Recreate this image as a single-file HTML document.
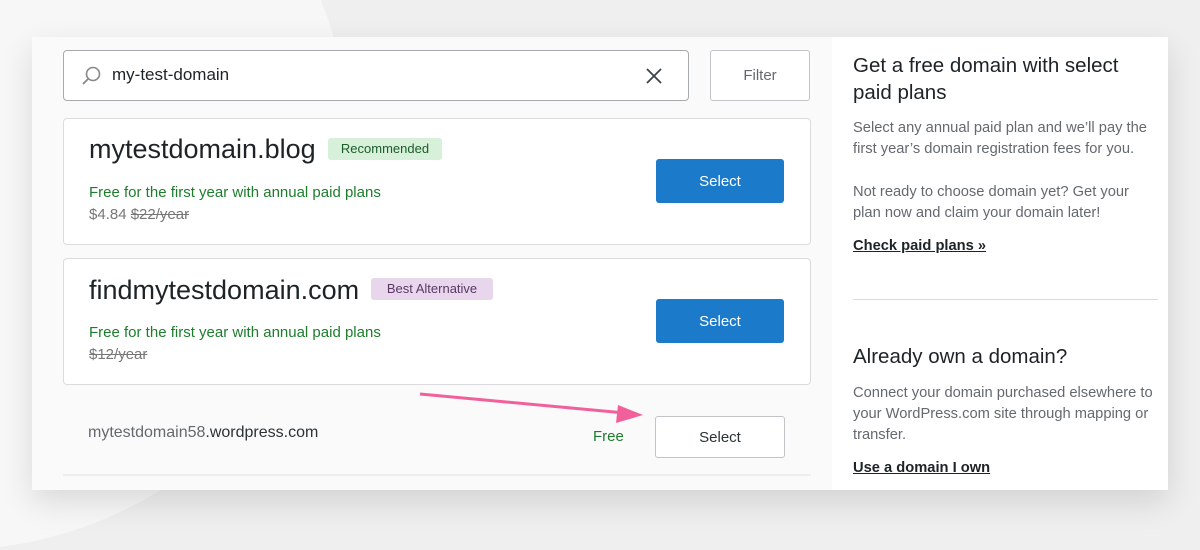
<!DOCTYPE html>
<html><head><style>
*{margin:0;padding:0;box-sizing:border-box}
body{width:1200px;height:528px;overflow:hidden;background:#efefef;font-family:"Liberation Sans",sans-serif;position:relative}
.blob{position:absolute;left:-450px;top:-250px;width:800px;height:800px;border-radius:50%;background:#f7f7f7}
.panel{position:absolute;left:32px;top:37px;width:1136px;height:453px;background:#fafafa;box-shadow:0 12px 30px rgba(0,0,0,.12)}
.right{position:absolute;left:800px;top:0;width:336px;height:453px;background:#fff}
.a{position:absolute}
.box{position:absolute;border:1px solid #dcdcde;border-radius:4px;background:#fff}
.t{position:absolute;white-space:nowrap}
.btn{position:absolute;border-radius:3px;display:flex;align-items:center;justify-content:center;font-size:15px}
.blue{background:#1b7ac9;color:#fff}
.out{background:#fff;border:1px solid #c3c4c7;color:#2c3338}
.g{color:#1d7d2d;font-size:15px}
.p{color:#777;font-size:15px}
.rt{color:#646970;font-size:14.7px;line-height:21px}
.lk{color:#1d2327;font-size:14.7px;text-decoration:underline;font-weight:bold}
</style></head><body>
<div class="blob"></div>
<div class="panel">
<div class="right"></div>
</div>
<div class="box" style="left:63px;top:50px;width:626px;height:51px;border-color:#a7aaad"></div>
<svg class="a" style="left:80px;top:65px" width="22" height="22" viewBox="0 0 22 22"><circle cx="13" cy="9" r="6.5" fill="none" stroke="#888" stroke-width="1.6"/><path d="M8.5 13.5 3 19" stroke="#888" stroke-width="1.8"/></svg>
<div class="t" style="left:112px;top:65px;font-size:17px;color:#1d2327">my-test-domain</div>
<svg class="a" style="left:645px;top:67px" width="18" height="18"><path d="M2 2 16 16M16 2 2 16" stroke="#3c434a" stroke-width="1.8"/></svg>
<div class="btn out" style="left:710px;top:50px;width:100px;height:51px;color:#646970">Filter</div>

<div class="box" style="left:63px;top:118px;width:748px;height:127px"></div>
<div class="t" style="left:89px;top:134px;font-size:27px;color:#1d2327">mytestdomain.blog</div>
<div class="t" style="left:328px;top:138px;width:114px;height:22px;background:#d6f0da;border-radius:3px;color:#1c5b2a;font-size:13px;text-align:center;line-height:22px">Recommended</div>
<div class="t g" style="left:89px;top:184px">Free for the first year with annual paid plans</div>
<div class="t p" style="left:89px;top:206px">$4.84 <s>$22/year</s></div>
<div class="btn blue" style="left:656px;top:159px;width:128px;height:44px">Select</div>

<div class="box" style="left:63px;top:258px;width:748px;height:127px"></div>
<div class="t" style="left:89px;top:275px;font-size:27px;color:#1d2327">findmytestdomain.com</div>
<div class="t" style="left:371px;top:278px;width:122px;height:22px;background:#e8d6ec;border-radius:3px;color:#5a3866;font-size:13px;text-align:center;line-height:22px">Best Alternative</div>
<div class="t g" style="left:89px;top:324px">Free for the first year with annual paid plans</div>
<div class="t p" style="left:89px;top:346px"><s>$12/year</s></div>
<div class="btn blue" style="left:656px;top:299px;width:128px;height:44px">Select</div>

<div class="t" style="left:88px;top:424px;font-size:16px;color:#646970">mytestdomain58<span style="color:#2c3338">.wordpress.com</span></div>
<div class="t g" style="left:593px;top:428px">Free</div>
<div class="btn out" style="left:655px;top:416px;width:130px;height:42px">Select</div>
<div class="a" style="left:63px;top:474px;width:748px;height:2px;background:#eee"></div>
<svg class="a" style="left:0;top:0" width="1200" height="528"><path d="M420 394 L625 413" stroke="#f2609b" stroke-width="3"/><path d="M643 415 L618 405 L616 423Z" fill="#f2609b"/></svg>

<div class="t" style="left:853px;top:52px;font-size:20.5px;line-height:27px;color:#1d2327">Get a free domain with select<br>paid plans</div>
<div class="t rt" style="left:853px;top:118px">Select any annual paid plan and we’ll pay the<br>first year’s domain registration fees for you.</div>
<div class="t rt" style="left:853px;top:182px">Not ready to choose domain yet? Get your<br>plan now and claim your domain later!</div>
<div class="t lk" style="left:853px;top:238px">Check paid plans »</div>
<div class="a" style="left:853px;top:299px;width:305px;height:1px;background:#dcdcde"></div>
<div class="t" style="left:853px;top:345px;font-size:20.5px;color:#1d2327">Already own a domain?</div>
<div class="t rt" style="left:853px;top:383px">Connect your domain purchased elsewhere to<br>your WordPress.com site through mapping or<br>transfer.</div>
<div class="t lk" style="left:853px;top:460px">Use a domain I own</div>
</body></html>
